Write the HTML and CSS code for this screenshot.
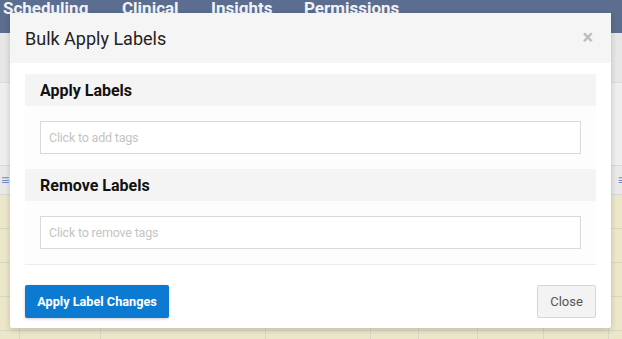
FILE: index.html
```html
<!DOCTYPE html>
<html>
<head>
<meta charset="utf-8">
<link rel="stylesheet" href="styles.css">
</head>
<body>
<div class="page">
  <nav class="topnav">
    <span class="nav-item">Scheduling</span>
    <span class="nav-item">Clinical</span>
    <span class="nav-item">Insights</span>
    <span class="nav-item">Permissions</span>
  </nav>
  <div class="subbar"></div>
  <div class="toolbar"></div>
  <div class="listrow"><span class="list-icon">&#8801;</span><span class="list-icon right">&#8801;</span></div>
  <div class="grid">
    <div class="grid-row"></div>
    <div class="grid-row"></div>
    <div class="grid-row"></div>
    <div class="grid-row"></div>
  </div>
</div>

<div class="modal">
  <div class="modal-header">
    <h4 class="modal-title">Bulk Apply Labels</h4>
    <span class="modal-close">&times;</span>
  </div>
  <div class="modal-body">
    <div class="section">
      <div class="section-head">Apply Labels</div>
      <div class="section-body">
        <div class="tag-input">Click to add tags</div>
      </div>
    </div>
    <div class="section last">
      <div class="section-head">Remove Labels</div>
      <div class="section-body">
        <div class="tag-input">Click to remove tags</div>
      </div>
    </div>
  </div>
  <div class="modal-footer">
    <button class="btn btn-primary">Apply Label Changes</button>
    <button class="btn btn-default">Close</button>
  </div>
</div>
</body>
</html>
```
FILE: styles.css
```css
* { box-sizing: border-box; }
html, body {
  margin: 0;
  padding: 0;
  width: 622px;
  height: 339px;
  overflow: hidden;
  font-family: Roboto, "Liberation Sans", Arial, sans-serif;
}
.page {
  width: 622px;
  height: 339px;
  display: flex;
  flex-direction: column;
  background: #ebebeb;
}
.topnav {
  height: 33px;
  background: #5b6e8f;
  display: flex;
  align-items: flex-start;
  padding-left: 3px;
}
.nav-item {
  color: #f2f4f8;
  font-weight: bold;
  font-size: 17px;
  line-height: 18px;
  margin-top: -1px;
}
.nav-item:nth-child(1) { width: 119px; }
.nav-item:nth-child(2) { width: 89px; }
.nav-item:nth-child(3) { width: 93px; }
.subbar {
  height: 49px;
  background: #e6e6e6;
}
.toolbar {
  height: 84px;
  background: #eeeeee;
  border-top: 1px solid #dcdcdc;
  border-bottom: 1px solid #d8d8d8;
}
.listrow {
  height: 29px;
  background: #e9e9e9;
  display: flex;
  justify-content: space-between;
  align-items: center;
  border-bottom: 1px solid #d6d6d6;
}
.list-icon {
  color: #6c8fc4;
  font-size: 14px;
  line-height: 14px;
  margin-left: 1px;
}
.list-icon.right { margin-right: -4px; }
.grid {
  flex: 1;
  background: #ece7c9;
  display: flex;
  flex-direction: column;
  background-image:
    linear-gradient(to right, transparent 19px, #d9d6c6 19px, #d9d6c6 20px, transparent 20px),
    linear-gradient(to right, transparent 100px, #d9d6c6 100px, #d9d6c6 101px, transparent 101px),
    linear-gradient(to right, transparent 265px, #d9d6c6 265px, #d9d6c6 266px, transparent 266px),
    linear-gradient(to right, transparent 370px, #d9d6c6 370px, #d9d6c6 371px, transparent 371px),
    linear-gradient(to right, transparent 418px, #d9d6c6 418px, #d9d6c6 419px, transparent 419px),
    linear-gradient(to right, transparent 477px, #d9d6c6 477px, #d9d6c6 478px, transparent 478px),
    linear-gradient(to right, transparent 543px, #d9d6c6 543px, #d9d6c6 544px, transparent 544px),
    linear-gradient(to right, transparent 608px, #d9d6c6 608px, #d9d6c6 609px, transparent 609px);
}
.grid-row {
  height: 34px;
  border-bottom: 1px solid #d9d6c6;
}

.modal {
  position: absolute;
  left: 10px;
  top: 13px;
  width: 601px;
  height: 315px;
  background: #ffffff;
  border-radius: 2px;
  box-shadow: 0 2px 6px rgba(0,0,0,0.18);
  display: flex;
  flex-direction: column;
}
.modal-header {
  height: 50px;
  background: #f5f5f5;
  display: flex;
  align-items: center;
  justify-content: space-between;
  padding: 0 18px 0 15px;
}
.modal-title {
  margin: 0;
  font-size: 18px;
  font-weight: normal;
  color: #222;
}
.modal-close {
  color: #bdbdbd;
  font-size: 20px;
  font-weight: bold;
  line-height: 20px;
  margin-top: -3px;
}
.modal-body {
  padding: 11px 15px 0 15px;
}
.section-head {
  height: 32px;
  background: #f4f4f4;
  padding-left: 15px;
  display: flex;
  align-items: center;
  font-weight: bold;
  font-size: 16px;
  color: #111;
}
.section-body {
  background: #fdfdfd;
  padding: 15px 15px 15px 15px;
}
.section.last .section-body {
  border-bottom: 1px solid #ececec;
}
.tag-input {
  height: 33px;
  border: 1px solid #d9d9d9;
  background: #fff;
  padding-left: 8px;
  display: flex;
  align-items: center;
  font-size: 12.5px;
  color: #c4c4c4;
  letter-spacing: -0.2px;
}
.modal-footer {
  display: flex;
  justify-content: space-between;
  align-items: center;
  padding: 20px 15px 0 15px;
}
.btn {
  height: 33px;
  font-family: Roboto, "Liberation Sans", Arial, sans-serif;
  border-radius: 2px;
  padding: 0;
  cursor: pointer;
}
.btn-primary {
  width: 144px;
  background: #0c7ad1;
  color: #fff;
  border: none;
  font-weight: bold;
  font-size: 12.7px;
  box-shadow: 0 1px 3px rgba(0,0,0,0.2);
}
.btn-default {
  width: 59px;
  background: #f3f3f3;
  color: #555;
  border: 1px solid #d6d6d6;
  font-size: 13px;
}
```
